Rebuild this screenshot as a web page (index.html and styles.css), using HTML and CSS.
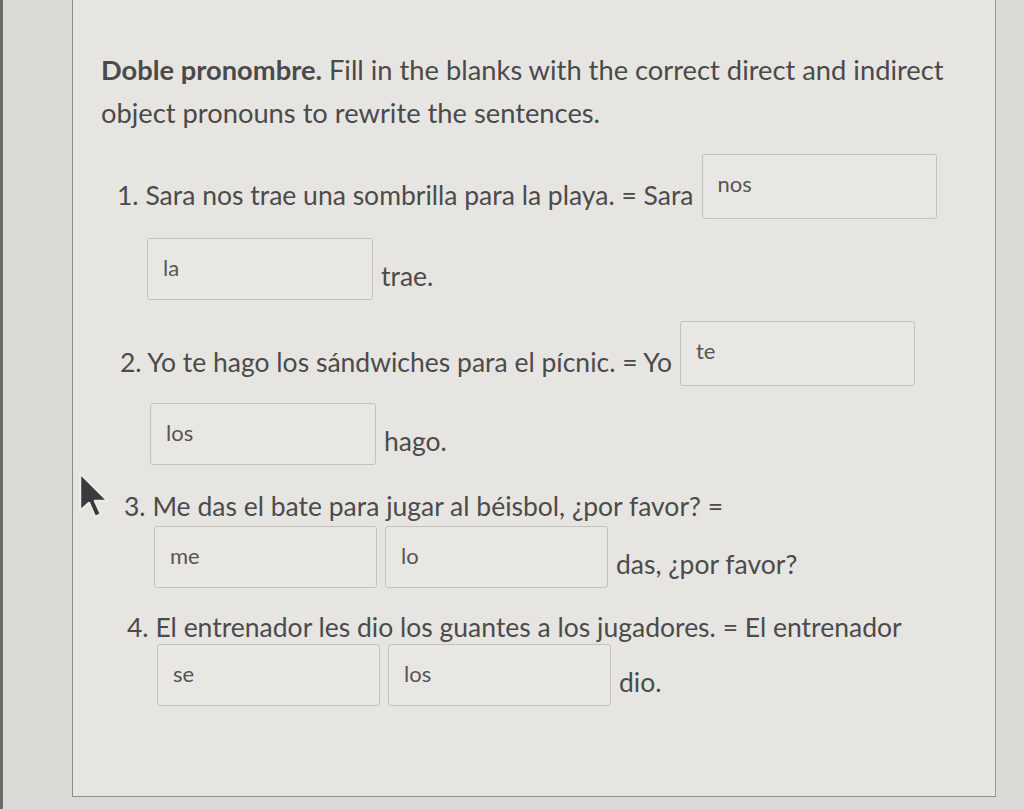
FILE: index.html
```html
<!DOCTYPE html>
<html lang="es">
<head>
<meta charset="utf-8">
<title>Doble pronombre</title>
<link rel="stylesheet" href="styles.css">
</head>
<body>
<div class="screen">
  <div class="panel">
    <p class="intro"><strong>Doble pronombre.</strong> Fill in the blanks with the correct direct and indirect object pronouns to rewrite the sentences.</p>

    <div class="q q1">
      <div class="row first">
        <span class="txt">1. Sara nos trae una sombrilla para la playa. = Sara</span>
        <span class="box wide">nos</span>
      </div>
      <div class="row second">
        <span class="box">la</span>
        <span class="txt">trae.</span>
      </div>
    </div>

    <div class="q q2">
      <div class="row first">
        <span class="txt">2. Yo te hago los sándwiches para el pícnic. = Yo</span>
        <span class="box wide">te</span>
      </div>
      <div class="row second">
        <span class="box">los</span>
        <span class="txt">hago.</span>
      </div>
    </div>

    <div class="q q3">
      <div class="row only">
        <span class="txt">3. Me das el bate para jugar al béisbol, ¿por favor? =</span>
      </div>
      <div class="row second tight">
        <span class="box">me</span>
        <span class="box">lo</span>
        <span class="txt">das, ¿por favor?</span>
      </div>
    </div>

    <div class="q q4">
      <div class="row only">
        <span class="txt">4. El entrenador les dio los guantes a los jugadores. = El entrenador</span>
      </div>
      <div class="row second tighter">
        <span class="box">se</span>
        <span class="box">los</span>
        <span class="txt">dio.</span>
      </div>
    </div>
  </div>
  <svg class="cursor" width="36" height="50" viewBox="0 0 36 50">
    <path d="M2 2 L2 40 L11 32 L17 46 L23 43 L17 30 L30 30 Z" fill="#3a3a3e" stroke="#ecebe8" stroke-width="2.5" stroke-linejoin="round"/>
  </svg>
</div>
</body>
</html>
```

FILE: styles.css
```css
html, body {
  margin: 0;
  padding: 0;
}
body {
  background: #dedcd8;
  font-family: Lato, "Open Sans", "Liberation Sans", sans-serif;
  color: #4b4b4b;
}
.screen {
  position: relative;
  width: 1024px;
  height: 809px;
  overflow: hidden;
  background: #dcdad6;
  border-left: 3px solid #6c6a66;
  box-sizing: border-box;
}
.panel {
  margin-left: 69px;
  width: 924px;
  height: 797px;
  box-sizing: border-box;
  background: #e7e5e1;
  border-left: 1px solid #8e8c88;
  border-right: 1px solid #9a9894;
  border-bottom: 1px solid #8e8c88;
  padding-top: 48px;
  padding-left: 28px;
}
.intro {
  margin: 0;
  font-size: 27.3px;
  line-height: 43px;
  width: 880px;
  color: #4a4a4a;
}
.intro strong {
  font-weight: 700;
}
.q {
  padding-left: 16px;
}
.q2 {
  padding-left: 19px;
}
.q3 {
  padding-left: 23px;
}
.q4 {
  padding-left: 26px;
}
.row {
  display: flex;
  align-items: flex-start;
  gap: 8px;
}
.row.first {
  margin-top: 20px;
}
.row.second {
  margin-top: 19px;
  padding-left: 30px;
}
.q2 .row.first {
  margin-top: 21px;
}
.q2 .row.second {
  margin-top: 17px;
}
.row.only {
  margin-top: 24px;
}
.q3 .row.only {
  margin-top: 26px;
}
.row.second.tight {
  margin-top: 5px;
}
.row.second.tighter {
  margin-top: 2px;
}
.txt {
  font-size: 26.5px;
  line-height: 30px;
  white-space: nowrap;
}
.row.first .txt {
  margin-top: 26px;
}
.row.second .txt {
  margin-top: 23px;
}
.row.only .txt {
  margin-top: 0;
}
.box {
  display: block;
  box-sizing: border-box;
  width: 226px;
  height: 62px;
  padding: 15px 15px;
  font-size: 22px;
  line-height: 28px;
  color: #555;
  background: #e9e7e3;
  border: 1px solid #c4c2be;
  border-radius: 3px;
}
.q3 .box,
.q4 .box {
  width: 223px;
}
.box.wide {
  width: 235px;
  height: 65px;
}
.cursor {
  position: absolute;
  left: 75px;
  top: 471px;
}
```
